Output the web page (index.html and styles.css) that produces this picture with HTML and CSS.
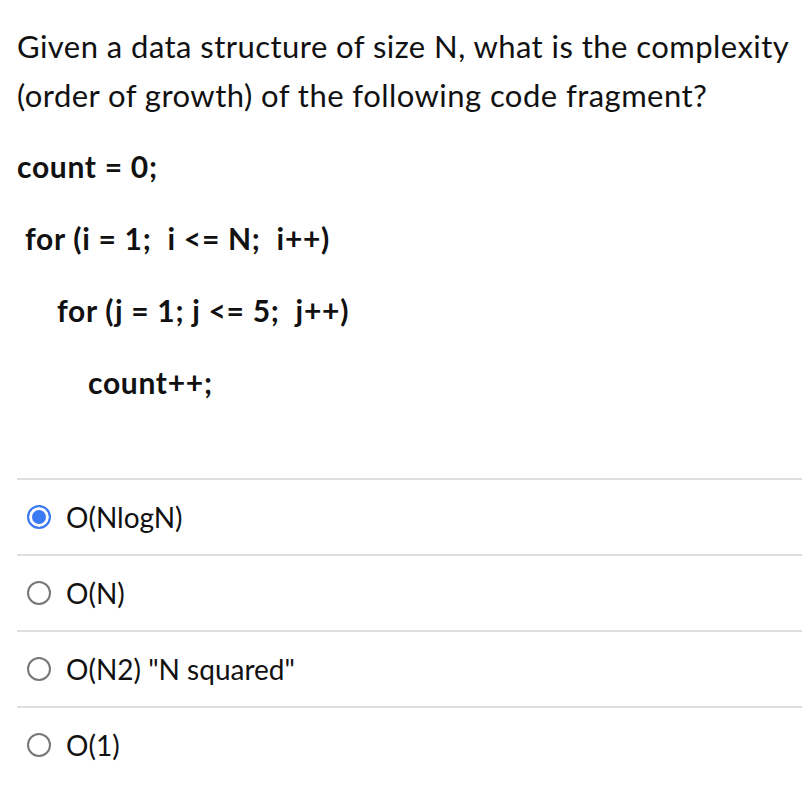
FILE: index.html
```html
<!DOCTYPE html>
<html>
<head>
<meta charset="utf-8">
<link rel="stylesheet" href="styles.css">
</head>
<body>
<div class="page">
  <p class="question">Given a data structure of size N, what is the complexity (order of growth) of the following code fragment?</p>
  <div class="code">
    <div class="code-line">count = 0;</div>
    <div class="code-line indent-1">for (i = 1;&nbsp; i &lt;= N;&nbsp; i++)</div>
    <div class="code-line indent-2">for (j = 1; j &lt;= 5;&nbsp; j++)</div>
    <div class="code-line indent-3">count++;</div>
  </div>
  <div class="options">
    <label class="option"><span class="radio checked"></span><span class="opt-text">O(NlogN)</span></label>
    <label class="option"><span class="radio"></span><span class="opt-text">O(N)</span></label>
    <label class="option"><span class="radio"></span><span class="opt-text">O(N2) "N squared"</span></label>
    <label class="option"><span class="radio"></span><span class="opt-text">O(1)</span></label>
  </div>
</div>
</body>
</html>
```

FILE: styles.css
```css
html, body {
  margin: 0;
  padding: 0;
  background: #fff;
}
body {
  font-family: Lato, "Open Sans", sans-serif;
  color: #111;
}
.page {
  padding: 22px 0 0 17px;
}
.question {
  margin: 0;
  font-size: 31px;
  letter-spacing: 0.45px;
  line-height: 49px;
}
.code {
  margin-top: 10px;
  font-size: 30px;
  letter-spacing: 0.7px;
  font-weight: 700;
}
.code-line {
  line-height: 72px;
  height: 72px;
  white-space: nowrap;
}
.indent-1 { padding-left: 8px; }
.indent-2 { padding-left: 40px; }
.indent-3 { padding-left: 71px; }
.options {
  margin-top: 60px;
}
.option {
  display: flex;
  align-items: center;
  height: 74px;
  border-top: 2px solid #dedede;
}
.radio {
  box-sizing: border-box;
  width: 24px;
  height: 24px;
  border-radius: 50%;
  border: 2px solid #777;
  margin-left: 10px;
  margin-right: 15px;
  flex: none;
  background: #fff;
}
.radio.checked {
  border: 2px solid #3a7af2;
  background: #3a7af2;
  box-shadow: inset 0 0 0 3px #fff;
}
.opt-text {
  font-size: 28px;
  line-height: 1;
}
```
